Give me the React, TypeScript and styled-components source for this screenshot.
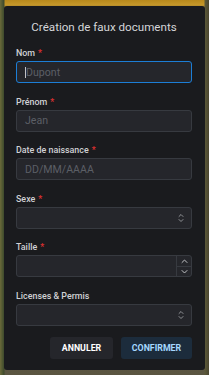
import styled, { createGlobalStyle } from 'styled-components'

const GlobalStyle = createGlobalStyle`
  html, body {
    margin: 0;
    padding: 0;
  }
  body {
    width: 209px;
    height: 375px;
    overflow: hidden;
    font-family: Roboto, 'Liberation Sans', sans-serif;
    background:
      linear-gradient(90deg, #6b6a3a 0px, #3d4a2c 4px, transparent 5px, transparent 204px, #5b5838 205px, #4a4630 209px),
      linear-gradient(180deg, #b8891c 0px, #c6982a 5px, #4e4a35 10px, #6a6448 60%, #5a5540 100%);
  }
`

const Backdrop = styled.div`
  padding: 6px 4px 5px 4px;
  box-sizing: border-box;
  height: 375px;
`

const Modal = styled.div`
  background: #1a1b1e;
  border-radius: 3px;
  padding: 10px 13px 11px 12px;
  box-sizing: border-box;
  height: 364px;
  display: flex;
  flex-direction: column;
`

const Title = styled.h2`
  margin: 0 0 8px;
  font-size: 11.6px;
  line-height: 22px;
  font-weight: 400;
  color: #d5d6d9;
  text-align: center;
`

const Fields = styled.div`
  display: flex;
  flex-direction: column;
  gap: 11.6px;
`

const Field = styled.div`
  display: flex;
  flex-direction: column;
`

const Label = styled.label`
  font-size: 8.9px;
  line-height: 15px;
  font-weight: 500;
  color: #d0d1d4;
`

const Star = styled.span`
  color: #e03131;
  margin-left: 3px;
`

const InputBox = styled.div<{ $focused?: boolean }>`
  position: relative;
  height: 22px;
  box-sizing: border-box;
  border: 1px solid ${(p) => (p.$focused ? '#1c7ed6' : '#373a40')};
  background: #25262b;
  border-radius: 3px;
  display: flex;
  align-items: center;
  padding-left: 8px;
  font-size: 10.6px;
  color: #5c5f66;
`

const Caret = styled.span`
  display: inline-block;
  width: 1px;
  height: 11px;
  background: #c1c2c5;
`

const Chevron = styled.svg`
  position: absolute;
  right: 6px;
  top: 50%;
  transform: translateY(-50%);
  width: 8px;
  height: 10px;
`

const Stepper = styled.div`
  position: absolute;
  right: 0;
  top: 0;
  bottom: 0;
  width: 14px;
  border-left: 1px solid #373a40;
  display: flex;
  flex-direction: column;
`

const StepButton = styled.div<{ $top?: boolean }>`
  flex: 1;
  display: flex;
  align-items: center;
  justify-content: center;
  border-bottom: ${(p) => (p.$top ? '1px solid #373a40' : 'none')};
  svg {
    width: 7px;
    height: 5px;
  }
`

const Actions = styled.div`
  margin-top: 11px;
  display: flex;
  justify-content: flex-end;
  gap: 8px;
`

const Button = styled.button<{ $primary?: boolean }>`
  height: 22px;
  border: 0;
  border-radius: 3px;
  padding: 0;
  width: ${(p) => (p.$primary ? '71px' : '63px')};
  background: ${(p) => (p.$primary ? '#1c2c3c' : '#25262b')};
  color: ${(p) => (p.$primary ? '#a5d8ff' : '#ffffff')};
  font-family: Roboto, 'Liberation Sans', sans-serif;
  font-weight: 700;
  font-size: 8.8px;
`

const SelectIcon = () => (
  <Chevron viewBox="0 0 8 10" fill="none" stroke="#909296" strokeWidth="1" strokeLinecap="round" strokeLinejoin="round">
    <path d="M2 3.5 L4 1.5 L6 3.5" />
    <path d="M2 6.5 L4 8.5 L6 6.5" />
  </Chevron>
)

const Up = () => (
  <svg viewBox="0 0 7 5" fill="none" stroke="#c1c2c5" strokeWidth="1" strokeLinecap="round" strokeLinejoin="round">
    <path d="M1 3.5 L3.5 1 L6 3.5" />
  </svg>
)

const Down = () => (
  <svg viewBox="0 0 7 5" fill="none" stroke="#c1c2c5" strokeWidth="1" strokeLinecap="round" strokeLinejoin="round">
    <path d="M1 1.5 L3.5 4 L6 1.5" />
  </svg>
)

export default function App() {
  return (
    <>
      <GlobalStyle />
      <Backdrop>
        <Modal>
          <Title>Création de faux documents</Title>
          <Fields>
            <Field>
              <Label>
                Nom<Star>*</Star>
              </Label>
              <InputBox $focused>
                <Caret />
                Dupont
              </InputBox>
            </Field>
            <Field>
              <Label>
                Prénom<Star>*</Star>
              </Label>
              <InputBox>Jean</InputBox>
            </Field>
            <Field>
              <Label>
                Date de naissance<Star>*</Star>
              </Label>
              <InputBox>DD/MM/AAAA</InputBox>
            </Field>
            <Field>
              <Label>
                Sexe<Star>*</Star>
              </Label>
              <InputBox>
                <SelectIcon />
              </InputBox>
            </Field>
            <Field>
              <Label>
                Taille<Star>*</Star>
              </Label>
              <InputBox>
                <Stepper>
                  <StepButton $top>
                    <Up />
                  </StepButton>
                  <StepButton>
                    <Down />
                  </StepButton>
                </Stepper>
              </InputBox>
            </Field>
            <Field>
              <Label>Licenses &amp; Permis</Label>
              <InputBox>
                <SelectIcon />
              </InputBox>
            </Field>
          </Fields>
          <Actions>
            <Button>ANNULER</Button>
            <Button $primary>CONFIRMER</Button>
          </Actions>
        </Modal>
      </Backdrop>
    </>
  )
}
